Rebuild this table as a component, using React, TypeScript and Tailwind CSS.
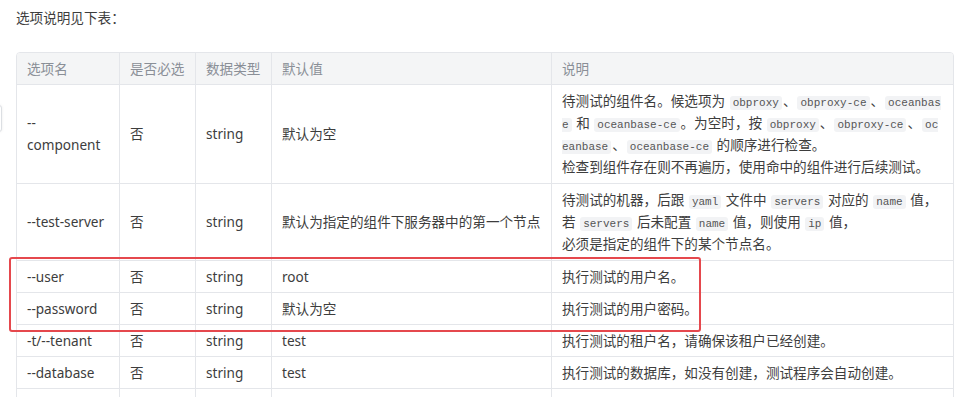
import type { ReactNode } from "react";

const font = "font-['Noto_Sans','Noto_Sans_CJK_SC',sans-serif]";

function Code({ children }: { children: ReactNode }) {
  return (
    <code className="mx-[1px] rounded-[3px] bg-[#f2f3f5] px-[3px] py-[1px] font-['Liberation_Mono','Noto_Sans_CJK_SC',monospace] text-[11px] leading-[14px] text-[#555] break-all">
      {children}
    </code>
  );
}

type Row = {
  name: string;
  required: string;
  type: string;
  def: string;
  desc: ReactNode;
  tall?: boolean;
};

const rows: Row[] = [
  {
    name: "--component",
    required: "否",
    type: "string",
    def: "默认为空",
    tall: true,
    desc: (
      <>
        待测试的组件名。候选项为 <Code>obproxy</Code>、<Code>obproxy-ce</Code>、<Code>oceanbase</Code> 和{" "}
        <Code>oceanbase-ce</Code>。为空时，按 <Code>obproxy</Code>、<Code>obproxy-ce</Code>、<Code>oceanbase</Code>、
        <Code>oceanbase-ce</Code> 的顺序进行检查。
        <br />
        检查到组件存在则不再遍历，使用命中的组件进行后续测试。
      </>
    ),
  },
  {
    name: "--test-server",
    required: "否",
    type: "string",
    def: "默认为指定的组件下服务器中的第一个节点",
    tall: true,
    desc: (
      <>
        待测试的机器，后跟 <Code>yaml</Code> 文件中 <Code>servers</Code> 对应的 <Code>name</Code> 值，
        <br />
        若 <Code>servers</Code> 后未配置 <Code>name</Code> 值，则使用 <Code>ip</Code> 值，
        <br />
        必须是指定的组件下的某个节点名。
      </>
    ),
  },
  { name: "--user", required: "否", type: "string", def: "root", desc: "执行测试的用户名。" },
  { name: "--password", required: "否", type: "string", def: "默认为空", desc: "执行测试的用户密码。" },
  { name: "-t/--tenant", required: "否", type: "string", def: "test", desc: "执行测试的租户名，请确保该租户已经创建。" },
  { name: "--database", required: "否", type: "string", def: "test", desc: "执行测试的数据库，如没有创建，测试程序会自动创建。" },
  { name: "", required: "", type: "", def: "", desc: "" },
];

const cell = "border border-[#e4e6ea] px-[10px] py-[5px] align-middle";

export default function App() {
  return (
    <div className={`relative h-[397px] w-[960px] overflow-hidden bg-white ${font} text-[13.6px] text-[#3d3d3d]`}>
      {/* sidebar handle peeking in from the left edge */}
      <div className="absolute left-[-8px] top-[105px] h-[27px] w-[10px] rounded-[3px] border border-[#dcdfe3] bg-white shadow-[0_0_3px_rgba(0,0,0,0.08)]" />

      <div className="pl-[16px] pt-[7px]">
        <p className="leading-[22px]">选项说明见下表：</p>

        <div className="mt-[23px] w-[938px] overflow-hidden rounded-[4px] border border-[#e4e6ea]">
          <table className="-m-[1px] w-[938px] table-fixed border-collapse">
            <colgroup>
              <col className="w-[103px]" />
              <col className="w-[76px]" />
              <col className="w-[76px]" />
              <col className="w-[280px]" />
              <col className="w-[403px]" />
            </colgroup>
            <thead>
              <tr className="bg-[#f4f5f6] text-left text-[#8a8f97]">
                <th className={`${cell} font-normal leading-[21px]`}>选项名</th>
                <th className={`${cell} font-normal leading-[21px]`}>是否必选</th>
                <th className={`${cell} font-normal leading-[21px]`}>数据类型</th>
                <th className={`${cell} font-normal leading-[21px]`}>默认值</th>
                <th className={`${cell} font-normal leading-[21px]`}>说明</th>
              </tr>
            </thead>
            <tbody>
              {rows.map((r, i) => (
                <tr key={i} className={r.tall ? "leading-[22px]" : "leading-[21px]"}>
                  <td className={cell}>{r.name}</td>
                  <td className={cell}>{r.required}</td>
                  <td className={cell}>{r.type}</td>
                  <td className={`${cell} whitespace-nowrap`}>{r.def}</td>
                  <td className={cell}>{r.desc || "\u00a0"}</td>
                </tr>
              ))}
            </tbody>
          </table>
        </div>
      </div>

      {/* red annotation box around --user / --password */}
      <div className="absolute left-[9px] top-[257px] h-[75px] w-[692px] rounded-[3px] border-2 border-[#e5484d]" />
    </div>
  );
}
